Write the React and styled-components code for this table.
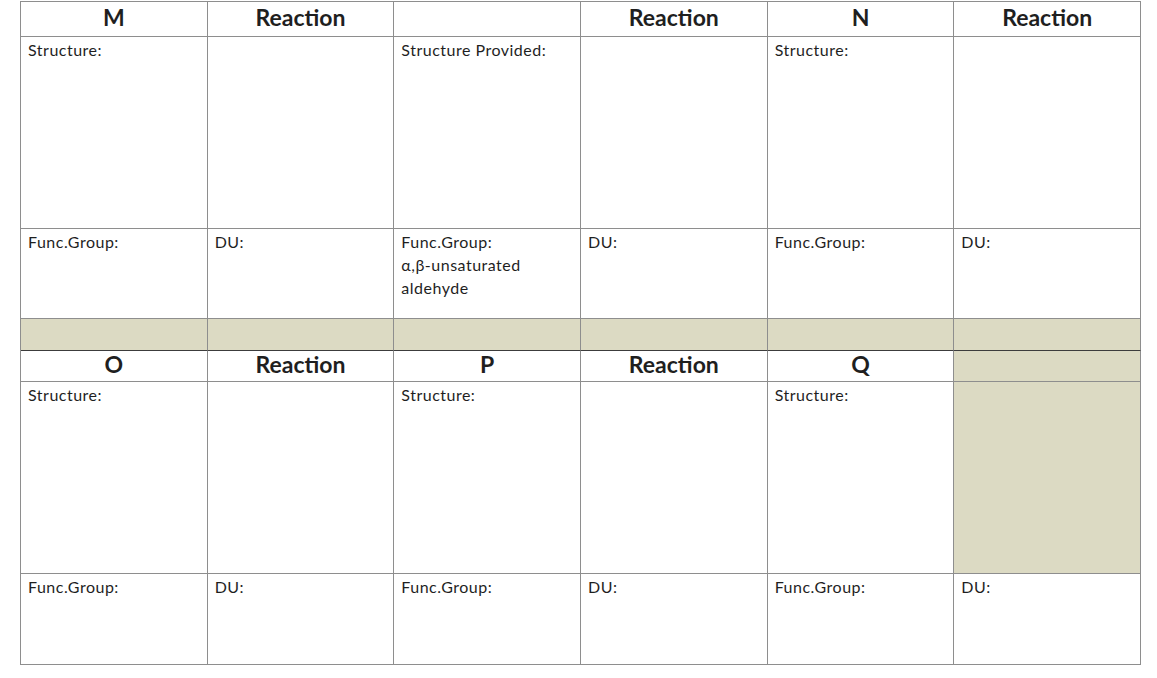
import React from 'react'
import styled, { createGlobalStyle } from 'styled-components'

const GlobalStyle = createGlobalStyle`
  html, body {
    margin: 0;
    padding: 0;
    background: #fff;
  }
  body {
    font-family: Lato, "Open Sans", "Liberation Sans", sans-serif;
    color: #1f1f1f;
  }
`

const Page = styled.div`
  width: 1157px;
  height: 678px;
  padding: 1px 0 0 20px;
  box-sizing: border-box;
`

const Sheet = styled.div`
  display: grid;
  width: 1120px;
  grid-template-columns: repeat(6, 1fr);
  grid-template-rows: 35px 192px 90px 32px 31px 192px 91px;
  border-top: 1px solid #8e8e8e;
  border-left: 1px solid #8e8e8e;
`

const Cell = styled.div`
  box-sizing: border-box;
  border-right: 1px solid #8e8e8e;
  border-bottom: 1px solid ${(p) => (p.$heavy ? '#3c3c3c' : '#8e8e8e')};
  background: ${(p) => (p.$shaded ? '#dcdac3' : '#fff')};
  padding: 1px 7px;
  font-size: 16px;
  line-height: 23px;
  letter-spacing: 0.5px;
`

const Head = styled(Cell)`
  display: flex;
  align-items: center;
  justify-content: center;
  padding: 0 0 3px;
  font-size: 23px;
  font-weight: 700;
  letter-spacing: 0;
`

const topBlock = [
  { head: 'M', body: 'Structure:', func: ['Func.Group:'] },
  { head: '', body: 'Structure Provided:', func: ['Func.Group:', 'α,β-unsaturated', 'aldehyde'] },
  { head: 'N', body: 'Structure:', func: ['Func.Group:'] },
]

const bottomBlock = [
  { head: 'O', body: 'Structure:' },
  { head: 'P', body: 'Structure:' },
  { head: 'Q', body: 'Structure:' },
]

const App = () => {
  return (
    <>
      <GlobalStyle />
      <Page>
        <Sheet>
          {topBlock.map((c, i) => (
            <React.Fragment key={'h' + i}>
              <Head>{c.head}</Head>
              <Head>Reaction</Head>
            </React.Fragment>
          ))}
          {topBlock.map((c, i) => (
            <React.Fragment key={'s' + i}>
              <Cell>{c.body}</Cell>
              <Cell />
            </React.Fragment>
          ))}
          {topBlock.map((c, i) => (
            <React.Fragment key={'f' + i}>
              <Cell>
                {c.func.map((line) => (
                  <div key={line}>{line}</div>
                ))}
              </Cell>
              <Cell>DU:</Cell>
            </React.Fragment>
          ))}
          {Array.from({ length: 6 }).map((_, i) => (
            <Cell key={'g' + i} $shaded $heavy />
          ))}
          {bottomBlock.map((c, i) => (
            <React.Fragment key={'bh' + i}>
              <Head>{c.head}</Head>
              {i < 2 ? <Head>Reaction</Head> : <Cell $shaded />}
            </React.Fragment>
          ))}
          {bottomBlock.map((c, i) => (
            <React.Fragment key={'bs' + i}>
              <Cell>{c.body}</Cell>
              <Cell $shaded={i === 2} />
            </React.Fragment>
          ))}
          {bottomBlock.map((c, i) => (
            <React.Fragment key={'bf' + i}>
              <Cell>Func.Group:</Cell>
              <Cell>DU:</Cell>
            </React.Fragment>
          ))}
        </Sheet>
      </Page>
    </>
  )
}

export default App
